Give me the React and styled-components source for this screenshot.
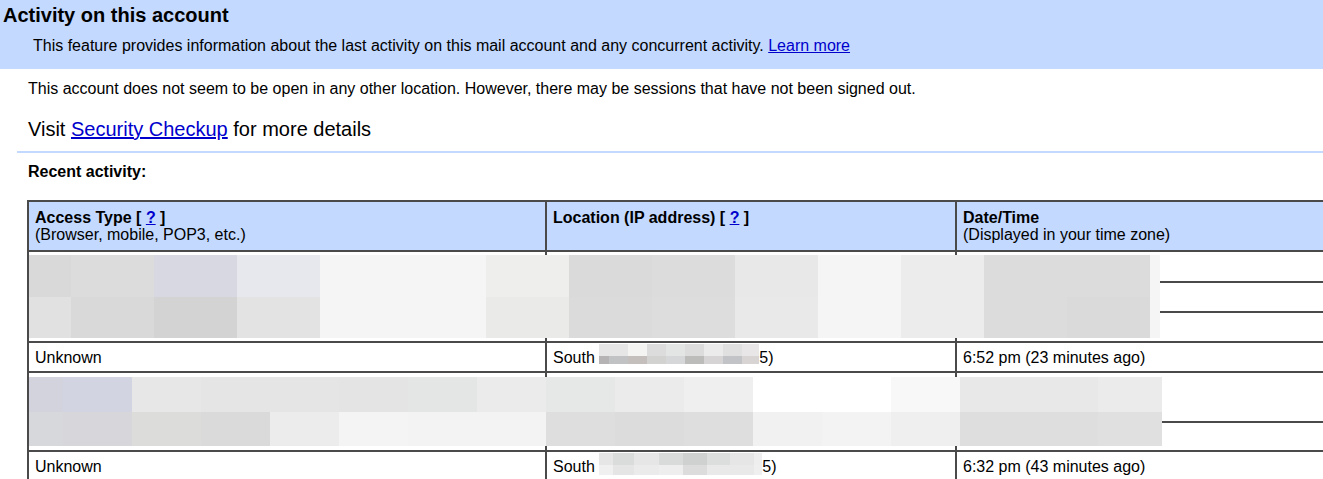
import React from "react";
import styled, { createGlobalStyle } from "styled-components";

const LINE = "#4a4a4a";
const BLUE_BG = "#c3d9ff";

// redacted screenshot mosaics: block widths + two rows of colours
const mosaicOne = {
  widths: [42, 83, 83, 83, 83, 83, 83, 83, 83, 83, 83, 83, 83, 83, 10],
  rows: [
    {
      height: 42,
      colors: ["#d9d9d9", "#dcdcdc", "#d8d8e3", "#e7e7ee", "#f5f5f5", "#f5f5f5", "#eeeeec", "#dadada", "#dcdcdc", "#e8e8e8", "#f5f5f5", "#ececec", "#dcdcdc", "#dcdcdc", "#f5f5f5"],
    },
    {
      height: 41,
      colors: ["#e1e1e1", "#d9d9d9", "#d3d3d3", "#e3e3e3", "#f5f5f5", "#f5f5f5", "#eaeae9", "#dbdbdb", "#dddddd", "#e9e9e9", "#f5f5f5", "#ececec", "#dcdcdc", "#dadada", "#f5f5f5"],
    },
  ],
};

const mosaicTwo = {
  widths: [34, 69, 69, 69, 69, 69, 69, 69, 69, 69, 69, 69, 69, 69, 69, 69, 64],
  rows: [
    {
      height: 35,
      colors: ["#d3d3de", "#d2d4e1", "#e7e7e7", "#e5e5e5", "#e5e5e5", "#e4e4e4", "#e4e5e5", "#ebebeb", "#e6e7e7", "#ebebeb", "#efefef", "#ffffff", "#ffffff", "#f8f8f8", "#e8e8e8", "#e8e8e8", "#ebebeb"],
    },
    {
      height: 34,
      colors: ["#d7d8dc", "#d7d7db", "#dcdcda", "#dadada", "#ececec", "#f4f4f4", "#f3f3f3", "#f3f3f3", "#dedede", "#dcdcdc", "#dedede", "#f1f1f1", "#f3f3f3", "#efefef", "#dedede", "#dedede", "#e0e0e0"],
    },
  ],
};

const ipOne = {
  widths: [10, 19, 19, 19, 19, 19, 19, 19, 17],
  rows: [
    { height: 12, colors: ["#e6e6e6", "#e6e6e6", "#f4f4f2", "#dcdcdc", "#e3e4e4", "#dcdcdc", "#ebebeb", "#e0e0e0", "#e8e6e6"] },
    { height: 8, colors: ["#b5b3b3", "#c0c2c4", "#c4bfbd", "#d2d2d0", "#d6d7d9", "#bcbcbb", "#d6d4d4", "#c1c3c6", "#d8d4d4"] },
  ],
};

const ipTwo = {
  widths: [14, 21, 25, 24, 24, 23, 24, 8],
  rows: [
    { height: 12, colors: ["#e6e6e6", "#dadbdb", "#e6e6e6", "#d9dada", "#cfd0d0", "#dcdddd", "#e6e6e6", "#eeeeee"] },
    { height: 10, colors: ["#f0f0f0", "#e5e5e5", "#ebebeb", "#efeeee", "#dcdcdc", "#e9e9e9", "#e9e9e9", "#efefef"] },
  ],
};

const sessions = [
  { mosaic: mosaicOne, height: 89, top: 3, splits: [29, 28, 28], ip: ipOne, time: "6:52 pm (23 minutes ago)" },
  { mosaic: mosaicTwo, height: 77, top: 4, splits: [48, 27], ip: ipTwo, time: "6:32 pm (43 minutes ago)" },
];

function Mosaic({ data, ...rest }) {
  return (
    <MosaicGrid
      {...rest}
      $cols={data.widths.map((w) => w + "px").join(" ")}
      $rows={data.rows.map((r) => r.height + "px").join(" ")}
    >
      {data.rows.map((row, ri) =>
        row.colors.map((c, ci) => <Tile key={ri + "-" + ci} $bg={c} />)
      )}
    </MosaicGrid>
  );
}

function Help() {
  return (
    <>
      {" [ "}
      <HelpLink href="#">?</HelpLink>
      {" ]"}
    </>
  );
}

export default function App() {
  return (
    <>
      <GlobalStyle />
      <Banner>
        <Title>Activity on this account</Title>
        <Intro>
          This feature provides information about the last activity on this
          mail account and any concurrent activity. <Link href="#">Learn more</Link>
        </Intro>
      </Banner>
      <Main>
        <Notice>
          This account does not seem to be open in any other location. However,
          there may be sessions that have not been signed out.
        </Notice>
        <Checkup>
          Visit <Link href="#">Security Checkup</Link> for more details
        </Checkup>
        <Divider />
        <SectionTitle>Recent activity:</SectionTitle>
        <Table>
          <Row $height={48}>
            <HeadCell>
              <strong>
                Access Type<Help />
              </strong>
              <br />
              (Browser, mobile, POP3, etc.)
            </HeadCell>
            <HeadCell>
              <strong>
                Location (IP address)<Help />
              </strong>
            </HeadCell>
            <HeadCell>
              <strong>Date/Time</strong>
              <br />
              (Displayed in your time zone)
            </HeadCell>
          </Row>
          {sessions.map((s, i) => (
            <React.Fragment key={i}>
              <Row $height={s.height}>
                <Cell />
                <Cell />
                <SplitCell>
                  {s.splits.map((h, j) => (
                    <SubRow key={j} $height={h} $first={j === 0} />
                  ))}
                </SplitCell>
                <Redaction data={s.mosaic} $top={s.top} />
              </Row>
              <Row $height={28}>
                <Cell>Unknown</Cell>
                <Cell>
                  South <InlineRedaction data={s.ip} />5)
                </Cell>
                <Cell>{s.time}</Cell>
              </Row>
            </React.Fragment>
          ))}
        </Table>
      </Main>
    </>
  );
}

const GlobalStyle = createGlobalStyle`
  html, body {
    margin: 0;
    padding: 0;
    overflow: hidden;
    background: #fff;
  }
  body {
    font-family: "Liberation Sans", Arial, sans-serif;
    font-size: 16px;
    color: #000;
  }
`;

const Banner = styled.header`
  background: ${BLUE_BG};
  height: 69px;
  box-sizing: border-box;
  padding: 3px 0 0 3px;
`;

const Title = styled.h1`
  margin: 0;
  font-size: 20px;
  line-height: 25px;
  font-weight: bold;
`;

const Intro = styled.p`
  margin: 10px 0 0 30px;
  line-height: 16px;
`;

const Link = styled.a`
  color: #0000cc;
  text-decoration: underline;
`;

const Main = styled.main`
  padding-left: 28px;
`;

const Notice = styled.p`
  margin: 12px 0 0;
  line-height: 16px;
`;

const Checkup = styled.p`
  margin: 21px 0 0;
  font-size: 20px;
  line-height: 23px;
`;

const Divider = styled.hr`
  margin: 10px 0 0 -11px;
  height: 2px;
  border: 0;
  background: ${BLUE_BG};
`;

const SectionTitle = styled.h3`
  margin: 11px 0 0;
  font-size: 16px;
  line-height: 16px;
  font-weight: bold;
`;

const Table = styled.div`
  margin: 20px 0 0 -1px;
  width: 1420px;
  border-left: 2px solid ${LINE};
  border-top: 2px solid ${LINE};
`;

const Row = styled.div`
  position: relative;
  display: grid;
  grid-template-columns: 518px 410px 1fr;
  height: ${(p) => p.$height}px;
  border-bottom: 2px solid ${LINE};
`;

const Cell = styled.div`
  box-sizing: border-box;
  border-right: 2px solid ${LINE};
  padding: 7px 6px 0;
  line-height: 16px;
  white-space: nowrap;
`;

const HeadCell = styled(Cell)`
  background: ${BLUE_BG};
  padding: 7px 6px 6px;
  line-height: 17px;
`;

const SplitCell = styled(Cell)`
  padding: 0;
  display: flex;
  flex-direction: column;
`;

const SubRow = styled.div`
  height: ${(p) => p.$height}px;
  border-top: ${(p) => (p.$first ? "none" : `2px solid ${LINE}`)};
`;

const HelpLink = styled.a`
  color: #0000cc;
  text-decoration: underline;
`;

const MosaicGrid = styled.div`
  display: grid;
  grid-template-columns: ${(p) => p.$cols};
  grid-template-rows: ${(p) => p.$rows};
`;

const Tile = styled.div`
  background: ${(p) => p.$bg};
`;

const Redaction = styled(Mosaic)`
  position: absolute;
  left: 0;
  top: ${(p) => p.$top}px;
`;

const InlineRedaction = styled(Mosaic)`
  display: inline-grid;
  vertical-align: top;
  margin-top: -6px;
`;
